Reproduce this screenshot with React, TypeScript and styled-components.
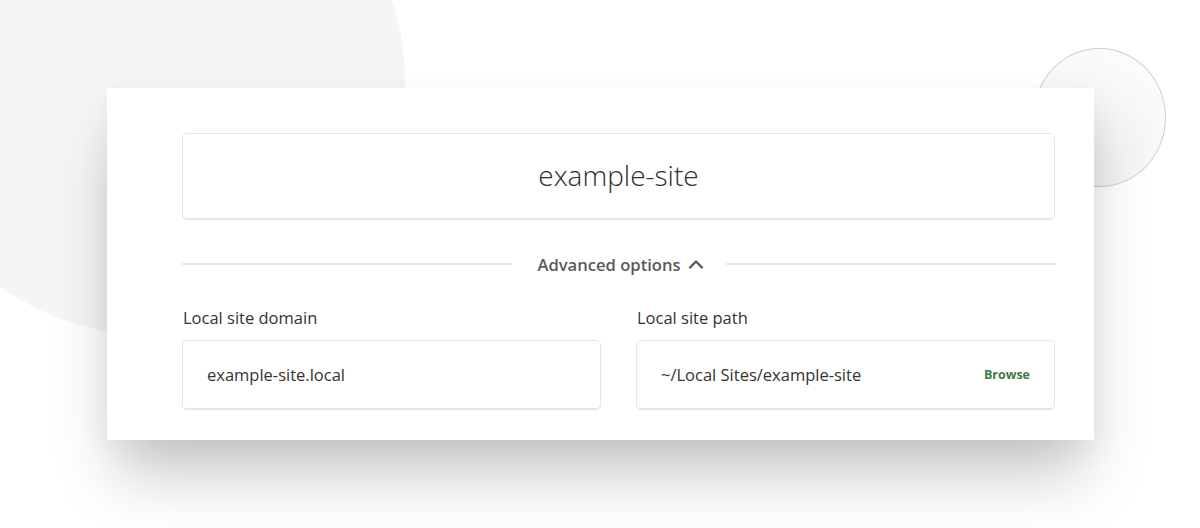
import styled, { createGlobalStyle } from 'styled-components';

const GlobalStyle = createGlobalStyle`
  html, body {
    margin: 0;
    padding: 0;
    background: #ffffff;
  }
  body {
    font-family: "Open Sans", Lato, "Liberation Sans", sans-serif;
    color: #333333;
  }
`;

const Stage = styled.div`
  position: relative;
  width: 1200px;
  height: 528px;
  overflow: hidden;
  background: #ffffff;
  padding: 88px 106px 0 107px;
  box-sizing: border-box;
`;

// decorative background shapes sit behind the card
const Blob = styled.div`
  position: absolute;
  left: -105px;
  top: -175px;
  width: 510px;
  height: 510px;
  border-radius: 50%;
  background: #f5f5f5;
`;

const Ring = styled.div`
  position: absolute;
  left: 1033px;
  top: 48px;
  width: 133px;
  height: 139px;
  border-radius: 50%;
  border: 1px solid #cfcfcf;
  box-sizing: border-box;
  background: radial-gradient(circle at 30% 80%, #ececec 0%, #f8f8f8 60%, #ffffff 100%);
`;

const Card = styled.div`
  position: relative;
  width: 987px;
  height: 352px;
  background: #ffffff;
  box-shadow: 0 44px 60px -10px rgba(0, 0, 0, 0.22), 0 8px 30px rgba(0, 0, 0, 0.05);
  padding: 45px 39px 0 75px;
  box-sizing: border-box;
  display: flex;
  flex-direction: column;
`;

const NameField = styled.div`
  height: 87px;
  border: 1px solid #e6e6e6;
  border-bottom-width: 2px;
  border-radius: 5px;
  box-sizing: border-box;
  display: flex;
  align-items: center;
  justify-content: center;
  font-size: 28px;
  font-weight: 300;
  color: #2e2e2e;
  padding-bottom: 2px;
`;

const Divider = styled.div`
  display: flex;
  align-items: center;
  gap: 22px;
  margin-top: 33px;
  height: 22px;
`;

const Rule = styled.div`
  flex: 1;
  height: 2px;
  background: #e6e6e6;
`;

const Toggle = styled.div`
  display: flex;
  align-items: center;
  gap: 7px;
  font-size: 16.6px;
  font-weight: 600;
  color: #5a5a5a;
  padding-left: 4px;
`;

const Fields = styled.div`
  display: grid;
  grid-template-columns: 1fr 1fr;
  column-gap: 35px;
  margin-top: 32px;
`;

const Field = styled.div`
  display: flex;
  flex-direction: column;
`;

const Label = styled.div`
  font-size: 16.5px;
  color: #333333;
  height: 22px;
  line-height: 22px;
  padding-left: 1px;
  margin-bottom: 11px;
`;

const Input = styled.div`
  height: 70px;
  border: 1px solid #e6e6e6;
  border-bottom-width: 2px;
  border-radius: 5px;
  box-sizing: border-box;
  display: flex;
  align-items: center;
  justify-content: space-between;
  padding: 0 24px 0 24px;
  font-size: 16.5px;
  color: #333333;
`;

const Browse = styled.span`
  font-size: 12.5px;
  font-weight: 700;
  color: #3e7b41;
`;

const ChevronUp = () => (
  <svg width="16" height="10" viewBox="0 0 16 10" fill="none">
    <path d="M2 8.5 L8 2.5 L14 8.5" stroke="#5a5a5a" strokeWidth="2.4" strokeLinecap="round" strokeLinejoin="round" />
  </svg>
);

const App = () => {
  return (
    <>
      <GlobalStyle />
      <Stage>
        <Blob />
        <Ring />
        <Card>
          <NameField>example-site</NameField>
          <Divider>
            <Rule />
            <Toggle>
              Advanced options
              <ChevronUp />
            </Toggle>
            <Rule />
          </Divider>
          <Fields>
            <Field>
              <Label>Local site domain</Label>
              <Input>example-site.local</Input>
            </Field>
            <Field>
              <Label>Local site path</Label>
              <Input>
                ~/Local Sites/example-site
                <Browse>Browse</Browse>
              </Input>
            </Field>
          </Fields>
        </Card>
      </Stage>
    </>
  );
};

export default App;
